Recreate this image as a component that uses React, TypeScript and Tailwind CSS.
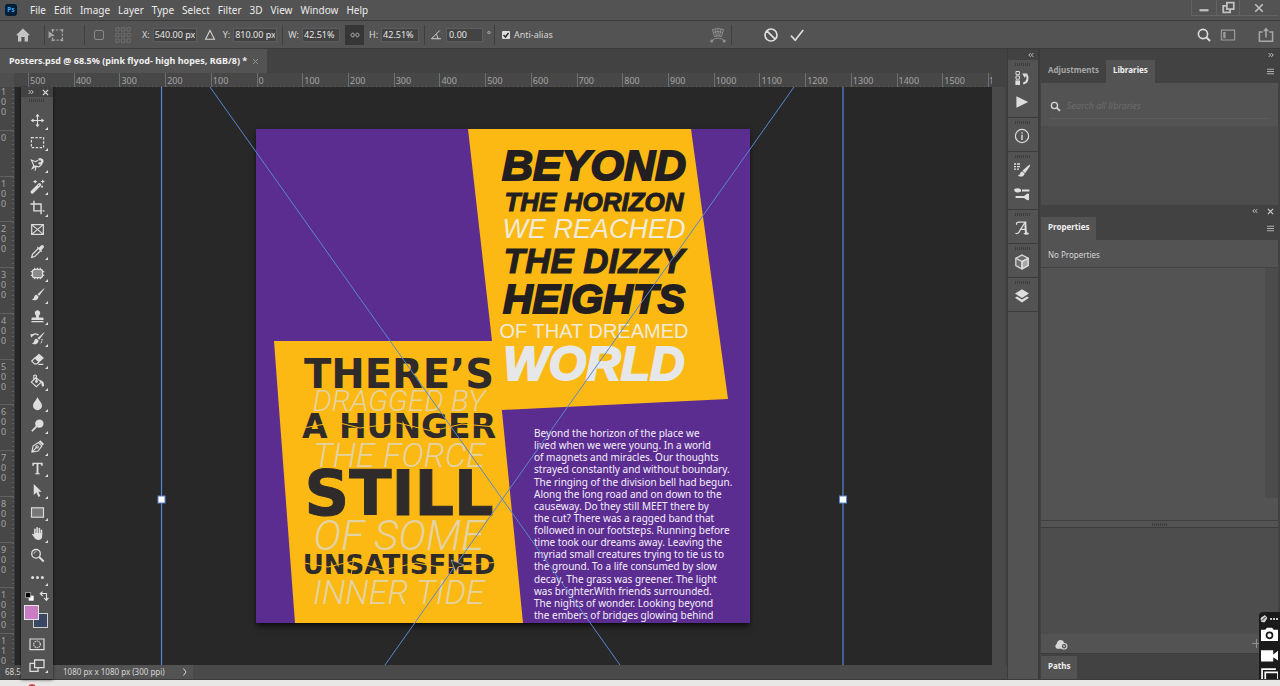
import React, { useState } from 'react';

type IconProps = { children: React.ReactNode; className?: string };

// Every glyph is drawn on a 16 unit grid and takes the text colour
function Glyph({ children, className = 'size-4' }: IconProps) {
  return (
    <svg viewBox="0 0 16 16" className={className} fill="none" stroke="currentColor" strokeWidth="1.2" aria-hidden="true">
      {children}
    </svg>
  );
}

const brushTip = (
  <g fill="currentColor" stroke="none">
    <path d="M15 1.2 L8 7.6 L9.8 9.4 L15.3 1.8Z" />
    <path d="M7.2 8.3 C5 8.4 4.6 10 4.2 11.4 C3.8 12.6 2.8 13.2 1.6 13.4 C4.4 15.2 8.8 14 9.2 10.3Z" />
  </g>
);

const menus = ['File', 'Edit', 'Image', 'Layer', 'Type', 'Select', 'Filter', '3D', 'View', 'Window', 'Help'];

const tools: { name: string; flyout: boolean; icon: React.ReactNode }[] = [
  {
    name: 'Move',
    flyout: true,
    icon: (
      <>
        <path d="M8 2.5V13.5M2.5 8H13.5" />
        <path d="M8 .8L5.8 3.8H10.2ZM8 15.2L5.8 12.2H10.2ZM.8 8L3.8 5.8V10.2ZM15.2 8L12.2 5.8V10.2Z" fill="currentColor" stroke="none" />
      </>
    ),
  },
  { name: 'Marquee', flyout: true, icon: <rect x="1.5" y="2.8" width="13" height="10.6" strokeDasharray="2.6 1.6" strokeWidth="1.3" /> },
  {
    name: 'Lasso',
    flyout: true,
    icon: (
      <>
        <path d="M8.5 3.4L6 5 1.5 3.2 4 9 2.5 12.2 6.2 9.8 9.5 10.5 13 7.5M4.6 9.3L6.5 10.6 5.3 14.6" />
        <path d="M9 2.5H11.5A2.2 2.2 0 0 1 11.5 6.8H9" strokeWidth="2.6" />
      </>
    ),
  },
  {
    name: 'Magic wand',
    flyout: true,
    icon: (
      <>
        <path d="M2.5 13.8L10 6.2" strokeWidth="3.6" strokeLinecap="round" />
        <path d="M8.7 7.3L10 6.1" stroke="#535353" strokeWidth="1" />
        <path d="M5.5 1V4.6M3.7 2.8H7.3M13.6 .8V4.4M11.8 2.6H15.4M12.8 7V9.4M11.6 8.2H14" />
      </>
    ),
  },
  { name: 'Crop', flyout: true, icon: <path d="M4.2 .8V11.6H12M.5 4.2H11.8V15.2M13.4 11.6H15.5" strokeWidth="1.5" /> },
  {
    name: 'Frame',
    flyout: false,
    icon: (
      <>
        <rect x="1.8" y="2.8" width="12.4" height="10.4" strokeWidth="1.3" />
        <path d="M1.8 2.8L14.2 13.2M14.2 2.8L1.8 13.2" />
      </>
    ),
  },
  {
    name: 'Eyedropper',
    flyout: true,
    icon: (
      <>
        <path d="M8.8 4.8L2.6 11 1.8 14.2 5 13.4 11.2 7.2" strokeWidth="1.3" />
        <path d="M7.4 4L12 8.6 13 7.6 12 6.6 14.6 4A1.9 1.9 0 0 0 12 1.4L9.4 4 8.4 3Z" fill="currentColor" stroke="none" />
      </>
    ),
  },
  {
    name: 'Patch',
    flyout: true,
    icon: (
      <>
        <rect x="2.6" y="3.6" width="10.8" height="8.8" rx="2.4" fill="#8a8a8a" strokeWidth="1.3" />
        <path d="M5 1.8V4M8 1.8V4M11 1.8V4M5 12V14.2M8 12V14.2M11 12V14.2M.8 6H3M.8 10H3M13 6H15.2M13 10H15.2" />
      </>
    ),
  },
  { name: 'Brush', flyout: true, icon: brushTip },
  {
    name: 'Clone stamp',
    flyout: true,
    icon: (
      <path
        d="M8 1.2A3 3 0 0 1 10.3 6C9.4 7 9.3 8.4 9.6 9H13.6Q14.4 9 14.4 10V11.6H1.6V10Q1.6 9 2.4 9H6.4C6.7 8.4 6.6 7 5.7 6A3 3 0 0 1 8 1.2ZM1.6 12.8H14.4V14.2H1.6Z"
        fill="currentColor"
        stroke="none"
      />
    ),
  },
  {
    name: 'History brush',
    flyout: true,
    icon: (
      <>
        <path d="M2 5.2C4 2.6 7 3 9 4.4" strokeWidth="1.4" />
        <path d="M.4 3.2L4.6 3.6 1.2 7Z" fill="currentColor" stroke="none" />
        <path d="M12.8 8.5Q13.2 11.5 10.8 13.4" strokeDasharray="1.6 1" />
        {brushTip}
      </>
    ),
  },
  {
    name: 'Eraser',
    flyout: true,
    icon: (
      <>
        <path d="M9.6 2.6L14 6.4 9.6 10.4 5.2 6.4Z" fill="currentColor" />
        <path d="M5.2 6.4L1.8 9.6 4.8 12.6H7.2L9.6 10.4M8.8 13.2H14.2" />
      </>
    ),
  },
  {
    name: 'Paint bucket',
    flyout: true,
    icon: (
      <>
        <path d="M6.4 3.8L12 8.6 6.8 13.6 1.4 8.6ZM4 6V1.8Q5.6 .2 6.8 1.8V8" />
        <circle cx="6.9" cy="8" r=".9" fill="currentColor" />
        <path d="M10.2 6.6C13.8 6.6 15 9.4 15 11.8Q15 13.4 13.8 13.4 12.4 13.4 12.4 11.6C12.4 10 11.6 8.6 10.2 6.6Z" fill="currentColor" stroke="none" />
      </>
    ),
  },
  { name: 'Blur', flyout: true, icon: <path d="M8 1C9.4 4.6 12.8 7.2 12.8 10.3A4.8 4.8 0 0 1 3.2 10.3C3.2 7.2 6.6 4.6 8 1Z" fill="currentColor" stroke="none" /> },
  {
    name: 'Dodge',
    flyout: true,
    icon: (
      <>
        <circle cx="10" cy="6" r="4.5" fill="currentColor" stroke="none" />
        <path d="M7 9L2 14" strokeWidth="1.8" />
      </>
    ),
  },
  {
    name: 'Pen',
    flyout: true,
    icon: (
      <>
        <path d="M2 14L3.2 7.6 9 3.8 12.6 7.4 8.6 12.8Z M2 14L7 9" />
        <circle cx="7.6" cy="8.4" r="1.2" />
        <path d="M9.4 2.8L11 1.2 15 5.2 13.4 6.8Z" fill="currentColor" stroke="none" />
      </>
    ),
  },
  { name: 'Type', flyout: true, icon: <path d="M2.5 1.8H13.5V5.4H12.4Q12.2 3.2 10.4 3.2H9V12.4Q9 13.2 10.6 13.2V14.2H5.4V13.2Q7 13.2 7 12.4V3.2H5.6Q3.8 3.2 3.6 5.4H2.5Z" fill="currentColor" stroke="none" /> },
  { name: 'Path selection', flyout: true, icon: <path d="M4 1V12.8L6.9 10.2 9 14.8 11 13.8 8.9 9.4H12.4Z" fill="currentColor" stroke="none" /> },
  { name: 'Rectangle', flyout: true, icon: <rect x="1.6" y="3" width="12.8" height="10" fill="#777" /> },
  {
    name: 'Hand',
    flyout: true,
    icon: (
      <>
        <path d="M5.2 8.6V3.4M7.6 8V2M10 8V2.6M12.2 8.6V4.6" strokeWidth="1.7" strokeLinecap="round" />
        <path d="M4.4 7.5H13V10.6C13 13.4 11.4 14.8 9 14.8 6.4 14.8 5.4 13.6 3.6 10.8L1.8 8.6Q2.8 7.6 4.4 9.2Z" fill="currentColor" stroke="none" />
      </>
    ),
  },
  {
    name: 'Zoom',
    flyout: false,
    icon: (
      <>
        <circle cx="6.4" cy="6.2" r="4.6" strokeWidth="1.4" />
        <path d="M9.8 9.6L14.6 14.4" strokeWidth="2" />
        <path d="M4 6.4Q4.2 4 6.6 3.8" strokeWidth=".8" />
      </>
    ),
  },
  {
    name: 'Edit toolbar',
    flyout: true,
    icon: (
      <g fill="currentColor" stroke="none">
        <circle cx="2.8" cy="8" r="1.6" />
        <circle cx="8" cy="8" r="1.6" />
        <circle cx="13.2" cy="8" r="1.6" />
      </g>
    ),
  },
];

const dock: { name: string; icon: React.ReactNode }[][] = [
  [
    {
      name: 'History',
      icon: (
        <>
          <path d="M2 1.5H5.4V4.7H2ZM2 6H5.4V9.2H2Z" strokeWidth="1" />
          <path d="M1.4 10.4H6V15H1.4Z" fill="currentColor" stroke="none" />
          <path d="M9.2 13.4C14 12.4 14.2 7.4 12.6 4.8" strokeWidth="2" />
          <path d="M8.2 3.4H13.6L10.6 7.8Z" fill="currentColor" stroke="none" />
        </>
      ),
    },
    { name: 'Actions', icon: <path d="M2.4 2.2L14.2 8 2.4 13.8Z" fill="currentColor" stroke="none" /> },
  ],
  [
    {
      name: 'Info',
      icon: (
        <>
          <circle cx="8" cy="8" r="6.6" />
          <path d="M8 6.8V12M8 4.2V5.6" strokeWidth="1.4" />
        </>
      ),
    },
  ],
  [
    {
      name: 'Brushes',
      icon: (
        <>
          <path d="M0 2H2M3 2H6M0 4.6H2M3 4.6H6M0 7.2H2M3 7.2H5" strokeWidth="1.3" />
          <path d="M16 3L9.4 8.6 11 10.2Z" fill="currentColor" />
          <path d="M8.6 9.4C6.6 9.4 6.4 11 5.8 12.2Q5.2 13.2 3.8 13.4C6.6 15.6 10.4 14.6 10.6 11.4Z" fill="currentColor" stroke="none" />
        </>
      ),
    },
    {
      name: 'Brush settings',
      icon: (
        <>
          <path d="M8 4.4H15.4M1.6 11H10" strokeWidth="2" />
          <path d="M0 3.2Q4 1.4 7 3.4V5.4Q3.6 7.6 .8 5.4ZM10 10L13.4 7.6 15 8V14L13.4 14.2 10 12Z" fill="currentColor" stroke="none" />
        </>
      ),
    },
  ],
  [
    {
      name: 'Character',
      icon: (
        <>
          <path d="M2.8 4.8Q1.6 2.2 5 2.2H12.4" />
          <path d="M1.4 13.2Q4 14.6 6 10.4L11 2.4" />
          <path d="M11.2 2.2L12 13.4H14.2" strokeWidth="2" />
          <path d="M6 9.4H12M9.8 13.6H14.6" />
        </>
      ),
    },
  ],
  [
    {
      name: '3D',
      icon: (
        <>
          <path d="M8 1L14.2 4.2V11.6L8 15 1.8 11.6V4.2Z" fill="#6e6e6e" />
          <path d="M8 7.6L14 4.4V11.5L8 14.8Z" fill="#a5a5a5" />
          <path d="M1.8 4.2L8 7.6 14.2 4.2M8 7.6V15" />
        </>
      ),
    },
  ],
  [
    {
      name: 'Layers',
      icon: (
        <g fill="currentColor" stroke="none">
          <path d="M8 1.2L15 5.6 8 10 1 5.6Z" />
          <path d="M1 9.8L3 8.5 8 11.6 13 8.5 15 9.8 8 14.4Z" />
        </g>
      ),
    },
  ],
];

const rulerX = ['500', '400', '300', '200', '100', '0', '100', '200', '300', '400', '500', '600', '700', '800', '900', '1000', '1100', '1200', '1300', '1400', '1500'];
const rulerY = ['100', '0', '100', '200', '300', '400', '500', '600', '700', '800', '900', '1000', '1100'];

const lyrics = [
  'Beyond the horizon of the place we',
  'lived when we were young. In a world',
  'of magnets and miracles. Our thoughts',
  'strayed constantly and without boundary.',
  'The ringing of the division bell had begun.',
  'Along the long road and on down to the',
  'causeway. Do they still MEET there by',
  'the cut? There was a ragged band that',
  'followed in our footsteps. Running before',
  'time took our dreams away. Leaving the',
  'myriad small creatures trying to tie us to',
  'the ground. To a life consumed by slow',
  'decay. The grass was greener. The light',
  'was brighter.With friends surrounded.',
  'The nights of wonder. Looking beyond',
  'the embers of bridges glowing behind',
];

function Grip() {
  return <div className="mx-auto h-[3px] w-4 bg-[repeating-linear-gradient(90deg,#3d3d3d_0_1px,transparent_1px_2px)]" />;
}

function Separator() {
  return <div className="mx-[3px] h-5 w-px shrink-0 bg-[#3f3f3f]" />;
}

function NumberField({ label, value, width }: { label: string; value: string; width: string }) {
  const [text, setText] = useState(value);
  return (
    <label className="flex items-center gap-[3px] text-[#d6d6d6]">
      {label}
      <input
        value={text}
        onChange={(e) => setText(e.target.value)}
        className={`h-[14px] border border-[#5e5e5e] bg-[#434343] px-px text-[#e6e6e6] outline-none ${width}`}
      />
    </label>
  );
}

function MenuBar() {
  return (
    <header className="flex h-[21px] shrink-0 items-center border-b border-[#3b3b3b]">
      <svg viewBox="0 0 12 12" className="ml-[5px] size-3 shrink-0" role="img" aria-label="Photoshop">
        <rect width="12" height="12" rx="2.4" fill="#001e36" />
        <text x="6" y="8.4" textAnchor="middle" fontSize="6.5" fontWeight="700" fill="#31a8ff" fontFamily="Open Sans, sans-serif">
          Ps
        </text>
      </svg>
      <nav className="ml-[9px] flex text-[10px] text-[#ececec]">
        {menus.map((menu) => (
          <button key={menu} className="px-1">
            {menu}
          </button>
        ))}
      </nav>
      <div className="mr-[2px] mb-1 ml-auto flex h-4 border-b border-l border-[#636363] text-[#c0c0c0]">
        <button aria-label="Minimize" className="flex w-6 items-center justify-center">
          <Glyph className="size-3"><path d="M2 11H14" strokeWidth="3" /></Glyph>
        </button>
        <button aria-label="Restore" className="flex w-6 items-center justify-center border-x border-[#636363]">
          <Glyph className="size-[13px]"><path d="M6 2H14.5V10H6ZM6 6H1.5V14H10V10" strokeWidth="2.2" /></Glyph>
        </button>
        <button aria-label="Close" className="flex w-[38px] items-center justify-center">
          <Glyph className="size-[10px]"><path d="M2 2L14 14M14 2L2 14" strokeWidth="2.6" /></Glyph>
        </button>
      </div>
    </header>
  );
}

function OptionsBar() {
  const [antiAlias, setAntiAlias] = useState(true);
  return (
    <div className="flex h-7 shrink-0 items-center border-b border-[#3b3b3b] text-[9px] text-[#d6d6d6]">
      <button aria-label="Home" className="ml-[15px] text-[#c4c4c4]">
        <Glyph><path d="M8 1.4L15 8.2H13V14.4H9.6V10H6.4V14.4H3V8.2H1Z" fill="currentColor" stroke="none" /></Glyph>
      </button>
      <div className="ml-[10px]"><Separator /></div>
      <button aria-label="Transform tool" className="text-[#a5a5a5]">
        <Glyph>
          <path d="M4.6 3H14.4V13.2H4.6Z" strokeDasharray="2 1.4" />
          <path d="M.6 4V11.4L3 9.4 6.6 8.8Z" fill="currentColor" stroke="none" />
          <path d="M3.6 2H5.6V4H3.6ZM13.2 2H15.2V4H13.2ZM3.6 12.2H5.6V14.2H3.6ZM13.2 12.2H15.2V14.2H13.2Z" fill="currentColor" stroke="none" />
        </Glyph>
      </button>
      <div className="ml-[17px]"><Separator /></div>
      <input type="checkbox" aria-label="Toggle reference point" className="ml-[6px] size-[10px] appearance-none rounded-xs border border-[#8a8a8a]" />
      <Glyph className="ml-[10px] size-[18px] text-[#707070]">
        <path d="M1.5 1.5H4.5V4.5H1.5ZM6.5 1.5H9.5V4.5H6.5ZM11.5 1.5H14.5V4.5H11.5ZM1.5 6.5H4.5V9.5H1.5ZM6.5 6.5H9.5V9.5H6.5ZM11.5 6.5H14.5V9.5H11.5ZM1.5 11.5H4.5V14.5H1.5ZM6.5 11.5H9.5V14.5H6.5ZM11.5 11.5H14.5V14.5H11.5Z" strokeWidth=".8" />
      </Glyph>
      <div className="ml-[10px]"><NumberField label="X:" value="540.00 px" width="w-[44px]" /></div>
      <Glyph className="mx-[7px] size-3"><path d="M8 2L14 13.6H2Z" strokeWidth="1.4" /></Glyph>
      <NumberField label="Y:" value="810.00 px" width="w-[44px]" />
      <div className="mx-[2px]"><Separator /></div>
      <NumberField label="W:" value="42.51%" width="w-[38px]" />
      <button aria-label="Link width and height" className="mx-[5px] flex h-5 w-[19px] items-center justify-center bg-[#363636] text-[#a8a8a8]">
        <Glyph className="size-[10px]">
          <path d="M7 6.4A3 3 0 1 0 7 9.6M9 6.4A3 3 0 1 1 9 9.6M5 8H11" strokeWidth="1.6" />
        </Glyph>
      </button>
      <NumberField label="H:" value="42.51%" width="w-[38px]" />
      <div className="mx-[2px]"><Separator /></div>
      <div className="flex items-center gap-1">
        <Glyph className="size-3"><path d="M13 2L2 13H14.5M8 7Q10.6 9 10.4 13" strokeWidth="1.3" /></Glyph>
        <input aria-label="Rotation" defaultValue="0.00" className="h-[14px] w-[37px] border border-[#5e5e5e] bg-[#434343] px-[2px] text-[#e6e6e6] outline-none" />
        <span>°</span>
      </div>
      <div className="mr-[2px]"><Separator /></div>
      <label className="ml-[2px] flex items-center gap-[4px]">
        <span className="relative flex size-2">
          <input
            type="checkbox"
            checked={antiAlias}
            onChange={(e) => setAntiAlias(e.target.checked)}
            className="size-2 appearance-none rounded-[1px] bg-[#dedede]"
          />
          {antiAlias && (
            <Glyph className="pointer-events-none absolute inset-0 size-2 text-[#2b2b2b]"><path d="M3 8L7 12 13 4" strokeWidth="3" /></Glyph>
          )}
        </span>
        Anti-alias
      </label>
      <div className="ml-[157px] flex items-center text-[#909090]">
        <Glyph>
          <path d="M2.4 2.6Q8 .2 13.6 2.6L11.4 9.6Q8 8 4.6 9.6ZM8 1.4V9M5 2L6.4 9M11 2L9.6 9M3.2 5.4Q8 3.6 12.8 5.4M1.4 14Q8 8 14.6 14" strokeWidth=".9" />
          <circle cx="1.8" cy="14" r="1" fill="currentColor" />
          <circle cx="14.2" cy="14" r="1" fill="currentColor" />
        </Glyph>
        <div className="ml-[2px]"><Separator /></div>
      </div>
      <button aria-label="Cancel transform" className="ml-7 text-[#dedede]">
        <Glyph><path d="M3.6 3.6L12.4 12.4M8 2A6 6 0 1 1 8 14 6 6 0 1 1 8 2Z" strokeWidth="1.7" /></Glyph>
      </button>
      <button aria-label="Commit transform" className="ml-[10px] text-[#dedede]">
        <Glyph><path d="M2 8.6L6.2 13.2 14.2 3" strokeWidth="1.7" /></Glyph>
      </button>
      <div className="mr-[6px] ml-auto flex items-center">
        <button aria-label="Search" className="text-[#dedede]">
          <Glyph><circle cx="7" cy="7" r="4.6" strokeWidth="1.6" /><path d="M10.4 10.4L14 14" strokeWidth="2" /></Glyph>
        </button>
        <button aria-label="Workspace" className="ml-2 text-[#9a9a9a]">
          <Glyph><path d="M1.4 3.2H14.6V13H1.4Z" /><path d="M3.2 5H5.6V11.2H3.2Z" fill="currentColor" stroke="none" /></Glyph>
        </button>
        <button aria-label="Share" className="ml-[22px] text-[#a8a8a8]">
          <Glyph><path d="M4.6 5H1.4V14.2H14.6V5H11.4M8 10.6V3" strokeWidth="1.5" /><path d="M8 .6L11 4.2H5Z" fill="currentColor" stroke="none" /></Glyph>
        </button>
      </div>
    </div>
  );
}

function Poster() {
  return (
    <div className="absolute top-[42px] left-[241px] size-[494px] overflow-hidden bg-[#5c2d91] shadow-md shadow-black/60">
      <svg viewBox="0 0 494 494" className="absolute inset-0 size-full" aria-hidden="true">
        <path d="M212 0H435L472 270 246 281 240 270 236 212Z" fill="#fdb913" />
        <path d="M18 212H239L267 494H39Z" fill="#fdb913" />
      </svg>

      <div className="absolute top-[19px] left-[238px] flex w-[200px] flex-col items-center font-['Liberation_Sans'] font-bold whitespace-nowrap text-[#231f20] italic">
        <p className="text-[43px] leading-[35px] [-webkit-text-stroke:2px]">BEYOND</p>
        <p className="text-[26px] leading-[38px] [-webkit-text-stroke:1px]">THE HORIZON</p>
        <p className="text-[27px] leading-[16px] font-normal text-[#f0ead8]">WE REACHED</p>
        <p className="text-[35px] leading-[48px] [-webkit-text-stroke:1px]">THE DIZZY</p>
        <p className="text-[41px] leading-[29px] [-webkit-text-stroke:2px]">HEIGHTS</p>
        <p className="text-[20px] leading-[35px] font-normal text-[#f0ead8] not-italic">OF THAT DREAMED</p>
        <p className="text-[48px] leading-[29px] text-[#e6e7e8] [-webkit-text-stroke:2px]">WORLD</p>
      </div>

      <div className="absolute top-[232px] left-[43px] flex w-[200px] flex-col items-center font-['DejaVu_Sans'] font-bold whitespace-nowrap text-[#2f2b2b]">
        <p className="text-[40px] leading-[27px]">THERE’S</p>
        <p className="font-['Roboto'] text-[30px] leading-[25px] font-light text-[#e3d2a2] italic">DRAGGED BY</p>
        <p className="text-[33px] leading-[28px]">A HUNGER</p>
        <p className="font-['Roboto'] text-[34px] leading-[28px] font-light text-[#e3d2a2] italic">THE FORCE</p>
        <p className="text-[62px] leading-[49px] [-webkit-text-stroke:1px]">STILL</p>
        <p className="font-['Roboto'] text-[42px] leading-[35px] font-light text-[#e3d2a2] italic">OF SOME</p>
        <p className="text-[26px] leading-[24px]">UNSATISFIED</p>
        <p className="font-['Roboto'] text-[34px] leading-[31px] font-light text-[#e3d2a2] italic">INNER TIDE</p>
      </div>

      {/* cuts through the broken words */}
      <svg viewBox="0 0 494 494" className="absolute inset-0 size-full" fill="none" stroke="#fdb913" aria-hidden="true">
        <path d="M42 300L80 293 104 299 142 294 176 302 206 295 240 298" strokeWidth="1" />
        <path d="M42 433L72 438 98 432 126 441 160 434 190 439 242 433M170 428L174 446M98 428L95 447" strokeWidth="1" />
      </svg>

      <div className="absolute top-[298px] left-[278px] flex h-[194px] flex-col justify-between text-[10px] leading-[12px] whitespace-nowrap text-[#f4effa]">
        {lyrics.map((line) => (
          <p key={line}>{line}</p>
        ))}
      </div>
    </div>
  );
}

function TransformBox() {
  return (
    <svg className="pointer-events-none absolute inset-0 size-full" fill="none" stroke="#5a86cf" strokeWidth="1" aria-hidden="true">
      <path d="M146.500 0V900M828 0V900" strokeWidth="1.2" />
      <path d="M195 0L605 578M779 0L370 578" />
      <rect x="143" y="409" width="7" height="7" fill="#fff" />
      <rect x="824.500" y="409" width="7" height="7" fill="#fff" />
      <path d="M436 473L449 478 443 480 441 485Z" fill="#2f2b2b" stroke="#b9c4cf" strokeWidth=".6" />
    </svg>
  );
}

function Toolbar() {
  return (
    <aside className="absolute top-[14px] bottom-0 left-[21px] flex w-8 flex-col bg-[#535353] text-[#dedede] shadow-sm shadow-black/50">
      <div className="flex h-[10px] shrink-0 items-center bg-[#424242] pl-[7px]">
        <Glyph className="size-[6px]"><path d="M2 3L7 8 2 13M9 3L14 8 9 13" strokeWidth="2.4" /></Glyph>
        <button aria-label="Close toolbar" className="ml-[8px]">
          <Glyph className="size-[7px]"><path d="M2 2L14 14M14 2L2 14" strokeWidth="2.8" /></Glyph>
        </button>
      </div>
      <div className="pt-[2px] pb-2"><Grip /></div>
      <div className="flex h-[478px] shrink-0 flex-col">
        {tools.map((tool) => (
          <button key={tool.name} aria-label={tool.name} className="relative flex flex-1 items-center justify-center">
            <Glyph className="size-[15px]">{tool.icon}</Glyph>
            {tool.flyout && (
              <Glyph className="absolute right-[5px] bottom-[2px] size-[3px]"><path d="M16 0V16H0Z" fill="currentColor" stroke="none" /></Glyph>
            )}
          </button>
        ))}
      </div>
      <div className="flex items-center justify-between px-1 pt-[3px]">
        <Glyph className="size-[9px]">
          <path d="M7 7H15V15H7Z" fill="#fff" stroke="#dedede" />
          <path d="M1 1H10V10H1Z" fill="#000" stroke="#cfcfcf" />
        </Glyph>
        <Glyph className="size-[10px]"><path d="M3 4H12V13M6 1L2 4 6 8M8 11L12 15 15 11" strokeWidth="1.8" /></Glyph>
      </div>
      <div className="relative mt-1 ml-[3px] h-7 w-6 shrink-0">
        <button aria-label="Background color" className="absolute right-0 bottom-[5px] size-[15px] border border-[#cfcfcf] bg-[#3a4764]" />
        <button aria-label="Foreground color" className="absolute top-0 left-0 size-[15px] border border-[#e6e6e6] bg-[#c97cc4]" />
      </div>
      <button aria-label="Quick mask" className="mt-[3px] flex justify-center">
        <Glyph className="size-4"><path d="M1 3H15V13.600H1Z" /><circle cx="8" cy="8.300" r="3.300" strokeDasharray="1.3 .8" /></Glyph>
      </button>
      <button aria-label="Screen mode" className="relative mt-[6px] flex justify-center">
        <Glyph className="size-4"><path d="M5.600 2H15V9.600H5.600ZM5.600 5.400H1V13.400H9V9.600" strokeWidth="1.3" /></Glyph>
        <Glyph className="absolute right-[5px] bottom-[1px] size-[3px]"><path d="M16 0V16H0Z" fill="currentColor" stroke="none" /></Glyph>
      </button>
    </aside>
  );
}

function Workspace() {
  return (
    <main className="flex min-w-0 flex-1 flex-col bg-[#424242]">
      <div className="flex h-6 shrink-0">
        <div className="flex items-center bg-[#535353] pr-2 pl-[9px] text-[9px] font-bold text-[#f0f0f0]">
          Posters.psd @ 68.5% (pink flyod- high hopes, RGB/8) *
          <button aria-label="Close document" className="ml-[5px] text-[#a0a0a0]">
            <Glyph className="size-[7px]"><path d="M2 2L14 14M14 2L2 14" strokeWidth="1.8" /></Glyph>
          </button>
        </div>
      </div>

      <div className="relative flex min-h-0 flex-1 flex-col">
        <div className="mr-[15px] flex h-[14px] shrink-0 overflow-hidden bg-[#474747] text-[9px] leading-[16px] text-[#a3a3a3]">
          <div className="w-7 shrink-0 bg-[linear-gradient(90deg,#4f4f4f_14px,transparent_14px)]" />
          <div className="grid w-[960px] shrink-0 grid-cols-[repeat(21,minmax(0,1fr))]">
            {rulerX.map((label, i) => (
              <div key={i} className="relative border-l border-[#6e6e6e] pl-px">
                {label}
                <div className="absolute inset-x-0 bottom-0 grid h-[3px] grid-cols-10">
                  {Array.from({ length: 10 }, (_, n) => (
                    <i key={n} className="border-l border-[#606060]" />
                  ))}
                </div>
              </div>
            ))}
          </div>
          <div className="shrink-0 border-l border-[#6e6e6e]">1600</div>
        </div>

        <div className="flex min-h-0 flex-1">
          <div className="w-[15px] shrink-0 overflow-hidden border-r border-[#383838] bg-[#474747] text-[9px] leading-[10px] text-[#a3a3a3]">
            <div className="-mt-[3px] grid h-[595px] grid-rows-[repeat(13,minmax(0,1fr))]">
              {rulerY.map((label, i) => (
                <div key={i} className="relative flex flex-col border-t border-[#606060] pt-[2px] pl-px">
                  {label.split('').map((digit, n) => (
                    <span key={n}>{digit}</span>
                  ))}
                  <div className="absolute inset-y-0 right-0 grid w-[2px] grid-rows-10">
                    {Array.from({ length: 10 }, (_, n) => (
                      <i key={n} className="border-t border-[#606060]" />
                    ))}
                  </div>
                </div>
              ))}
            </div>
          </div>
          <div className="relative min-w-0 flex-1 overflow-hidden bg-[#282828]">
            <Poster />
            <TransformBox />
          </div>
          <div className="w-[15px] shrink-0 border-r-2 border-[#424242] bg-[#4a4a4a]" />
        </div>

        <footer className="flex h-[14px] shrink-0 items-center bg-[#4a4a4a] text-[8px] text-[#d6d6d6]">
          <span className="w-[21px] shrink-0 overflow-hidden pl-[5px]">68.5%</span>
          <div className="flex h-full w-[172px] items-center justify-between bg-[#535353] pr-1 pl-[42px]">
            1080 px x 1080 px (300 ppi)
            <button aria-label="Status options">
              <Glyph className="size-2"><path d="M5 1L10 8 5 15" strokeWidth="2" /></Glyph>
            </button>
          </div>
        </footer>
        <Toolbar />
      </div>
    </main>
  );
}

function IconDock() {
  return (
    <div className="flex w-[33px] shrink-0 flex-col border-r-2 border-l border-[#3b3b3b] bg-[#535353] text-[#dedede]">
      <div className="flex h-[11px] shrink-0 items-center justify-end bg-[#424242] pr-1 text-[#cfcfcf]">
        <Glyph className="size-[6px]"><path d="M7 3L2 8 7 13M14 3L9 8 14 13" strokeWidth="2.4" /></Glyph>
      </div>
      {dock.map((group, i) => (
        <div key={i} className="border-b border-[#3b3b3b] pb-[3px]">
          <div className="h-[6px] pt-[3px]"><Grip /></div>
          {group.map((item) => (
            <button key={item.name} aria-label={item.name} className="flex h-6 w-full items-center justify-center pr-[2px]">
              <Glyph>{item.icon}</Glyph>
            </button>
          ))}
        </div>
      ))}
    </div>
  );
}

function PanelMenu() {
  return (
    <button aria-label="Panel menu" className="mr-1 ml-auto self-center text-[#b0b0b0]">
      <Glyph className="size-[7px]"><path d="M0 3H16M0 8H16M0 13H16" strokeWidth="2.4" /></Glyph>
    </button>
  );
}

function Panels() {
  return (
    <aside className="flex w-[240px] shrink-0 flex-col border-r-2 border-l border-[#424242] bg-[#4d4d4d] text-[8px] text-[#d6d6d6]">
      <div className="flex h-[11px] shrink-0 items-center justify-end bg-[#424242] pr-1">
        <Glyph className="size-[6px]"><path d="M2 3L7 8 2 13M9 3L14 8 9 13" strokeWidth="2.4" /></Glyph>
      </div>
      <div role="tablist" className="flex h-[23px] shrink-0 bg-[#424242] font-bold">
        <button role="tab" className="px-[7px] pb-1 text-[#a6a6a6]">Adjustments</button>
        <button role="tab" aria-selected="true" className="bg-[#535353] px-[7px] pb-1 text-[#f0f0f0]">Libraries</button>
        <PanelMenu />
      </div>
      <div className="h-[43px] shrink-0 bg-[#535353] px-[9px] pt-[11px]">
        <label className="flex h-[25px] items-center gap-[6px] border-b border-[#5c5c5c]">
          <Glyph className="size-[11px] shrink-0"><circle cx="6.500" cy="6.500" r="4.500" strokeWidth="2" /><path d="M10 10L14.500 14.500" strokeWidth="2.6" /></Glyph>
          <input aria-label="Search all libraries" placeholder="Search all libraries" className="min-w-0 flex-1 bg-transparent text-[9px] italic outline-none placeholder:text-[#6c6c6c]" />
        </label>
      </div>
      <div className="h-[79px] shrink-0" />

      <section className="flex min-h-0 flex-1 flex-col border-b border-[#3b3b3b] bg-[#535353]">
        <div className="flex h-3 shrink-0 items-center justify-end gap-[9px] bg-[#424242] pr-1">
          <Glyph className="size-[6px]"><path d="M7 3L2 8 7 13M14 3L9 8 14 13" strokeWidth="2.4" /></Glyph>
          <button aria-label="Close panel">
            <Glyph className="size-[7px]"><path d="M2 2L14 14M14 2L2 14" strokeWidth="2.4" /></Glyph>
          </button>
        </div>
        <div role="tablist" className="flex h-[23px] shrink-0 bg-[#424242] font-bold">
          <button role="tab" aria-selected="true" className="bg-[#535353] px-[7px] pb-1 text-[#f0f0f0]">Properties</button>
          <PanelMenu />
        </div>
        <p className="flex h-7 shrink-0 items-center border-b border-[#434343] px-[7px] pt-[2px]">No Properties</p>
        <div className="flex min-h-0 flex-1 justify-end pb-[22px]">
          <div className="w-[13px] bg-[#4c4c4c]" />
        </div>
        <div className="flex h-[7px] shrink-0 items-center border-t border-[#3f3f3f]"><Grip /></div>
      </section>

      <div className="h-[106px] shrink-0" />
      <div className="flex h-[19px] shrink-0 items-center justify-between bg-[#535353] pr-[17px] pl-[13px]">
        <Glyph className="size-[14px]">
          <path d="M3.600 13.400A3 3 0 0 1 3 8Q4 3.400 7.600 3.400 10.600 3.200 11.600 6.600L13.600 8.600 9 13.400Z" fill="currentColor" stroke="none" />
          <circle cx="11.600" cy="10.600" r="3.200" fill="#535353" />
          <path d="M10.400 9.400L12.800 11.800M12.800 9.400L10.400 11.800" strokeWidth=".9" />
        </Glyph>
        <button aria-label="New library item" className="text-[#909090]">
          <Glyph className="size-[9px]"><path d="M8 0V16M0 8H16" strokeWidth="2" /></Glyph>
        </button>
      </div>
      <div role="tablist" className="flex h-[26px] shrink-0 border-t border-[#3b3b3b] bg-[#424242] pt-[2px] font-bold">
        <button role="tab" aria-selected="true" className="bg-[#535353] px-[7px] pb-1 text-[#f0f0f0]">Paths</button>
      </div>
    </aside>
  );
}

function CaptureWidget() {
  return (
    <div className="absolute right-0 bottom-0 flex h-[67px] w-[21px] flex-col items-end overflow-hidden rounded-tl-sm bg-[#1a1a1a] pr-[2px] text-white">
      <div className="flex h-[14px] shrink-0 items-center gap-[2px]">
        <Glyph className="size-2"><path d="M2 6L10 1 14 6 9 14 3 13Z" fill="#cfcfcf" /><path d="M4 11L11 4" stroke="#1a1a1a" strokeWidth="2" /></Glyph>
        <Glyph className="size-2"><path d="M0 8H4M6 8H10M12 8H16" strokeWidth="3" /></Glyph>
      </div>
      <button aria-label="Take screenshot">
        <Glyph className="size-[17px]">
          <path d="M0 3.600H4L5.600 1.600H10.400L12 3.600H16V14H0Z" fill="currentColor" stroke="none" />
          <circle cx="8" cy="8.800" r="2.800" stroke="#1a1a1a" strokeWidth="1.6" />
        </Glyph>
      </button>
      <button aria-label="Record video" className="mt-1">
        <Glyph className="size-[17px]"><path d="M0 3H11.500V7L16 3.600V12.800L11.500 9.600V13.600H0Z" fill="currentColor" stroke="none" /></Glyph>
      </button>
      <button aria-label="Gallery" className="mt-[3px]">
        <Glyph className="size-[17px]"><path d="M1 13V2H14M4 5H16V14H4Z" strokeWidth="1.6" /></Glyph>
      </button>
    </div>
  );
}

export default function App() {
  return (
    <div className="flex h-screen flex-col overflow-hidden bg-[#535353] font-['Noto_Sans',sans-serif] select-none">
      <MenuBar />
      <OptionsBar />
      <div className="relative flex min-h-0 flex-1">
        <Workspace />
        <IconDock />
        <Panels />
        <CaptureWidget />
      </div>
      <div className="h-[7px] shrink-0 overflow-hidden border-t border-[#3b3b3b] bg-[#e9e6e6] pl-7">
        <div className="mt-1 size-2 rounded-full bg-[#c9504e]" />
      </div>
    </div>
  );
}
